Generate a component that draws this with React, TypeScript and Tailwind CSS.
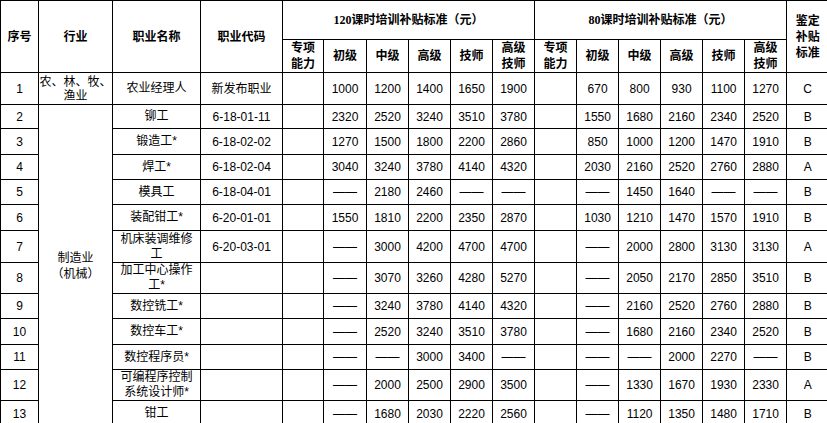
const DASH = '——';

type Row = {
  no: number;
  name: React.ReactNode;
  code: string;
  h120: (string | number)[];
  h80: (string | number)[];
  grade: string;
  h: string;
};

const rows: Row[] = [
  { no: 1, name: '农业经理人', code: '新发布职业', h120: ['', 1000, 1200, 1400, 1650, 1900], h80: ['', 670, 800, 930, 1100, 1270], grade: 'C', h: 'h-[32px]' },
  { no: 2, name: '铆工', code: '6-18-01-11', h120: ['', 2320, 2520, 3240, 3510, 3780], h80: ['', 1550, 1680, 2160, 2340, 2520], grade: 'B', h: 'h-[24px]' },
  { no: 3, name: '锻造工*', code: '6-18-02-02', h120: ['', 1270, 1500, 1800, 2200, 2860], h80: ['', 850, 1000, 1200, 1470, 1910], grade: 'B', h: 'h-[26px]' },
  { no: 4, name: '焊工*', code: '6-18-02-04', h120: ['', 3040, 3240, 3780, 4140, 4320], h80: ['', 2030, 2160, 2520, 2760, 2880], grade: 'A', h: 'h-[25px]' },
  { no: 5, name: '模具工', code: '6-18-04-01', h120: ['', DASH, 2180, 2460, DASH, DASH], h80: ['', DASH, 1450, 1640, DASH, DASH], grade: 'B', h: 'h-[25px]' },
  { no: 6, name: '装配钳工*', code: '6-20-01-01', h120: ['', 1550, 1810, 2200, 2350, 2870], h80: ['', 1030, 1210, 1470, 1570, 1910], grade: 'B', h: 'h-[26px]' },
  { no: 7, name: <>机床装调维修<br />工</>, code: '6-20-03-01', h120: ['', DASH, 3000, 4200, 4700, 4700], h80: ['', DASH, 2000, 2800, 3130, 3130], grade: 'A', h: 'h-[32px]' },
  { no: 8, name: <>加工中心操作<br />工*</>, code: '', h120: ['', DASH, 3070, 3260, 4280, 5270], h80: ['', DASH, 2050, 2170, 2850, 3510], grade: 'B', h: 'h-[30px]' },
  { no: 9, name: '数控铣工*', code: '', h120: ['', DASH, 3240, 3780, 4140, 4320], h80: ['', DASH, 2160, 2520, 2760, 2880], grade: 'B', h: 'h-[25px]' },
  { no: 10, name: '数控车工*', code: '', h120: ['', DASH, 2520, 3240, 3510, 3780], h80: ['', DASH, 1680, 2160, 2340, 2520], grade: 'B', h: 'h-[26px]' },
  { no: 11, name: '数控程序员*', code: '', h120: ['', DASH, DASH, 3000, 3400, DASH], h80: ['', DASH, DASH, 2000, 2270, DASH], grade: 'B', h: 'h-[25px]' },
  { no: 12, name: <>可编程序控制<br />系统设计师*</>, code: '', h120: ['', DASH, 2000, 2500, 2900, 3500], h80: ['', DASH, 1330, 1670, 1930, 2330], grade: 'A', h: 'h-[31px]' },
  { no: 13, name: '钳工', code: '', h120: ['', DASH, 1680, 2030, 2220, 2560], h80: ['', DASH, 1120, 1350, 1480, 1710], grade: 'B', h: 'h-[26px]' },
];

const sub = [<>专项<br />能力</>, '初级', '中级', '高级', '技师', <>高级<br />技师</>];

const td = 'border border-black text-center align-middle p-0';
const th = 'border border-black text-center align-middle p-0 font-bold leading-4';

export default function App() {
  return (
    <div className="w-[827px] h-[423px] overflow-hidden bg-white text-black">
      <table
        className="table-fixed border-collapse w-[828px] text-[12px] leading-4"
        style={{ fontFamily: '"Liberation Sans", "Noto Sans CJK SC", sans-serif' }}
      >
        <colgroup>
          <col className="w-[38px]" />
          <col className="w-[74px]" />
          <col className="w-[88px]" />
          <col className="w-[82px]" />
          <col className="w-[41px]" />
          <col className="w-[43px]" />
          {Array.from({ length: 11 }).map((_, i) => (
            <col key={i} className="w-[42px]" />
          ))}
        </colgroup>
        <thead style={{ fontFamily: '"Liberation Serif", "Noto Sans CJK SC", serif' }}>
          <tr className="h-[39px]">
            <th rowSpan={2} className={th}>序号</th>
            <th rowSpan={2} className={th}>行业</th>
            <th rowSpan={2} className={th}>职业名称</th>
            <th rowSpan={2} className={th}>职业代码</th>
            <th colSpan={6} className={th}>120课时培训补贴标准（元）</th>
            <th colSpan={6} className={th}>80课时培训补贴标准（元）</th>
            <th rowSpan={2} className={th}>鉴定<br />补贴<br />标准</th>
          </tr>
          <tr className="h-[33px]">
            {sub.map((s, i) => (
              <th key={'a' + i} className={th}>{s}</th>
            ))}
            {sub.map((s, i) => (
              <th key={'b' + i} className={th}>{s}</th>
            ))}
          </tr>
        </thead>
        <tbody>
          {rows.map((r) => (
            <tr key={r.no} className={r.h}>
              <td className={td}>{r.no}</td>
              {r.no === 1 && <td className={`${td} leading-[14px]`}>农、林、牧、<br />渔业</td>}
              {r.no === 2 && <td rowSpan={12} className={td}>制造业<br />（机械）</td>}
              <td className={`${td} leading-[15px]`}>{r.name}</td>
              <td className={td}>{r.code}</td>
              {r.h120.map((v, i) => (
                <td key={'a' + i} className={td}>{v}</td>
              ))}
              {r.h80.map((v, i) => (
                <td key={'b' + i} className={td}>{v}</td>
              ))}
              <td className={td}>{r.grade}</td>
            </tr>
          ))}
        </tbody>
      </table>
    </div>
  );
}
